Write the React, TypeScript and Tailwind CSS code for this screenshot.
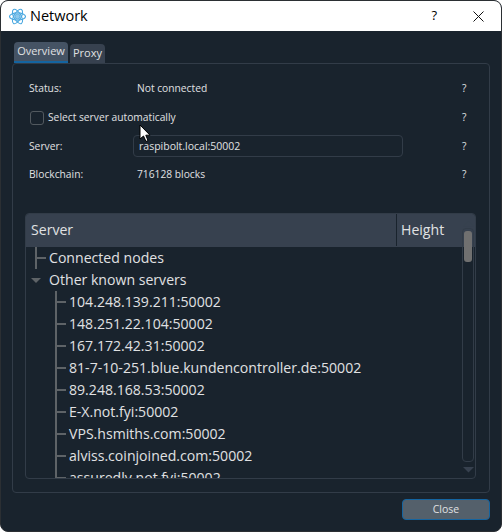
const SERVERS = [
  "104.248.139.211:50002",
  "148.251.22.104:50002",
  "167.172.42.31:50002",
  "81-7-10-251.blue.kundencontroller.de:50002",
  "89.248.168.53:50002",
  "E-X.not.fyi:50002",
  "VPS.hsmiths.com:50002",
  "alviss.coinjoined.com:50002",
  "assuredly.not.fyi:50002",
];

function ElectrumLogo() {
  return (
    <svg width="17" height="17" viewBox="0 0 17 17" fill="none" stroke="#4aa8e0" strokeWidth="1.1">
      <ellipse cx="8.5" cy="8.5" rx="8" ry="3.6" />
      <ellipse cx="8.5" cy="8.5" rx="8" ry="3.6" transform="rotate(60 8.5 8.5)" />
      <ellipse cx="8.5" cy="8.5" rx="8" ry="3.6" transform="rotate(120 8.5 8.5)" />
      <circle cx="8.5" cy="8.5" r="2.6" fill="#8cc8ec" stroke="#4aa8e0" strokeWidth="0.8" />
    </svg>
  );
}

function InfoRow({ label, value }: { label: string; value: string }) {
  return (
    <div className="flex h-[20px] items-center">
      <span className="w-[108px]">{label}</span>
      <span className="flex-1">{value}</span>
      <span className="mr-[6px] w-[5px]">?</span>
    </div>
  );
}

function TreeRow({ label, indent }: { label: string; indent: boolean }) {
  return (
    <div className={`relative flex h-[22px] shrink-0 items-center ${indent ? "pl-[43px]" : "pl-[23px]"}`}>
      <span className="whitespace-nowrap">{label}</span>
    </div>
  );
}

export default function App() {
  return (
    <div
      className="relative flex h-[532px] w-[502px] flex-col overflow-hidden rounded-[8px] border border-[#2b2f33] bg-[#19232d] text-[#e0e1e3]"
      style={{ fontFamily: '"Open Sans", "Noto Sans", sans-serif' }}
    >
      {/* title bar */}
      <div className="flex h-[30px] shrink-0 items-center bg-white pl-[8px] pr-[17px] text-black">
        <ElectrumLogo />
        <span className="ml-[4px] text-[14.5px]">Network</span>
        <span className="ml-auto mr-[36px] text-[13px]">?</span>
        <svg width="11" height="11" viewBox="0 0 11 11" stroke="#111" strokeWidth="1">
          <path d="M0.5 0.5 L10.5 10.5 M10.5 0.5 L0.5 10.5" />
        </svg>
      </div>

      {/* tabs */}
      <div className="mt-[11px] flex h-[21px] shrink-0 items-end gap-[2px] pl-[13px] text-[11px]">
        <div className="flex h-[21px] w-[54px] items-center justify-center rounded-t-[4px] border-b-[2px] border-[#1464a0] bg-[#455364]">
          Overview
        </div>
        <div className="flex h-[19px] w-[35px] items-center justify-center rounded-t-[4px] bg-[#37414f]">
          Proxy
        </div>
      </div>

      {/* panel */}
      <div className="ml-[11px] mr-[11px] flex h-[430px] shrink-0 flex-col rounded-[4px] border border-[#323c48] px-[16px] text-[10.25px]">
        <div className="mt-[15px] flex flex-col gap-[9px]">
          <InfoRow label="Status:" value="Not connected" />
          <div className="flex h-[20px] items-center">
            <span className="ml-[1px] h-[14px] w-[14px] rounded-[3px] border border-[#52595f]" />
            <span className="ml-[4px] flex-1">Select server automatically</span>
            <span className="mr-[6px] w-[5px]">?</span>
          </div>
          <div className="flex h-[20px] items-center">
            <span className="w-[104px]">Server:</span>
            <div className="-mt-[2px] flex h-[22px] w-[270px] shrink-0 items-center rounded-[4px] border border-[#323c48] pl-[5px] pt-[2px] text-[10.5px]">
              raspibolt.local:50002
            </div>
            <span className="ml-auto mr-[6px] w-[5px]">?</span>
          </div>
          <div className="-mt-[1px]">
            <InfoRow label="Blockchain:" value="716128 blocks" />
          </div>
        </div>

        {/* server tree */}
        <div className="relative mt-[28px] -ml-[4px] -mr-[3px] flex h-[266px] flex-col overflow-hidden rounded-[4px] border border-[#323c48] text-[14.1px]">
          <div className="flex h-[33px] shrink-0 items-center bg-[#37414f] pb-[1px] pr-[15px]">
            <span className="flex-1 pl-[5px]">Server</span>
            <span className="flex h-full w-[64px] items-center border-l border-[#19232d] pl-[4px]">Height</span>
          </div>
          <div className="relative flex flex-col">
            <TreeRow label="Connected nodes" indent={false} />
            <TreeRow label="Other known servers" indent={false} />
            {SERVERS.map((s) => (
              <TreeRow key={s} label={s} indent />
            ))}
            {/* branch lines */}
            <svg className="absolute left-0 top-0" width="70" height="232" stroke="#5e6367" strokeWidth="2" fill="none">
              <path d="M10 0 V22 M10 11 H20" />
              <path d="M30 44 V232" />
              <path d="M30 55 H40 M30 77 H40 M30 99 H40 M30 121 H40 M30 143 H40 M30 165 H40 M30 187 H40 M30 209 H40 M30 231 H40" />
              <path d="M5 31 H15 L10 36 Z" fill="#5e6367" stroke="none" />
            </svg>
          </div>
          {/* scrollbar */}
          <div className="absolute bottom-0 right-0 top-0 flex w-[14px] flex-col items-center">
            <svg className="mt-[7px]" width="11" height="6" viewBox="0 0 11 6">
              <path d="M5.5 0 L11 5.5 H0 Z" fill="#37414f" />
            </svg>
            <div className="mt-[1px] h-[234px] w-[12px] shrink-0 rounded-[4px] border border-[#323c48] px-[1px] pt-[2px]">
              <div className="h-[31px] w-full rounded-[3px] bg-[#707070]" />
            </div>
            <svg className="mt-[5px]" width="11" height="6" viewBox="0 0 11 6">
              <path d="M0 0 H11 L5.5 5.5 Z" fill="#37414f" />
            </svg>
          </div>
        </div>
      </div>

      {/* footer */}
      <div className="flex justify-end pr-[11px] pt-[6px]">
        <button className="h-[21px] w-[88px] rounded-[4px] border border-[#1464a0] bg-[#54606b] text-[10.5px]">
          Close
        </button>
      </div>

      {/* mouse pointer */}
      <svg className="absolute left-[138px] top-[123px]" width="13" height="19" viewBox="0 0 13 19">
        <path d="M1 1 V15 L4.5 12 L7 17.5 L9 16.5 L6.8 11.2 H11 Z" fill="#fff" stroke="#000" strokeWidth="1" />
      </svg>
    </div>
  );
}
